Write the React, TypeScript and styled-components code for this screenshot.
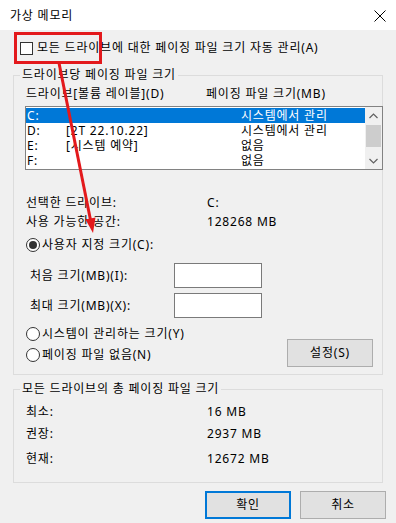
import React from 'react';
import styled, { createGlobalStyle, css } from 'styled-components';

const GlobalStyle = createGlobalStyle`
  html, body {
    margin: 0;
    padding: 0;
    background: #f0f0f0;
  }
  body {
    font-family: "Noto Sans", "Noto Sans CJK KR", sans-serif;
    font-size: 12px;
    letter-spacing: 0.8px;
    color: #000;
  }
  * {
    box-sizing: border-box;
  }
`;

const Window = styled.div`
  position: relative;
  width: 396px;
  height: 523px;
  background: #f0f0f0;
  overflow: hidden;
`;

const TitleBar = styled.div`
  height: 30px;
  background: #fff;
  display: flex;
  align-items: center;
  justify-content: space-between;
  padding: 0 10px 0 10px;
`;

const Title = styled.span`
  font-size: 12px;
  line-height: 16px;
  padding-top: 1px;
`;

const CloseButton = styled.div`
  width: 12px;
  height: 12px;
  margin-top: 2px;
  display: flex;
`;

const AutoRow = styled.div`
  display: flex;
  align-items: center;
  height: 16px;
  margin-top: 10px;
  padding-left: 20px;
  gap: 4px;
  line-height: 16px;
`;

const CheckBox = styled.span`
  width: 13px;
  height: 13px;
  border: 1px solid #333;
  background: #fff;
`;

const Group = styled.fieldset<{ $top: number }>`
  margin: ${p => p.$top}px 0 0 13px;
  width: 370px;
  padding: 0;
  border: 1px solid #dcdcdc;
  min-width: 0;
`;

const Legend = styled.legend`
  margin-left: 6px;
  padding: 0 2px;
  line-height: 16px;
`;

const GroupInner = styled.div<{ $pad: string }>`
  padding: ${p => p.$pad};
`;

const ListHeader = styled.div`
  display: grid;
  grid-template-columns: 180px 1fr;
  margin-top: 3px;
  padding-left: 1px;
  line-height: 16px;
`;

const ListBox = styled.div`
  display: flex;
  width: 358px;
  height: 64px;
  margin-top: 4px;
  border: 1px solid #828282;
  background: #fff;
`;

const Rows = styled.div`
  flex: 1;
  padding: 1px 0 0 0;
`;

const DriveRow = styled.div<{ $selected?: boolean }>`
  display: grid;
  grid-template-columns: 39px 175px 1fr;
  height: 15px;
  line-height: 15px;
  padding-left: 1px;
  ${p => p.$selected && css`
    background: #0078d7;
    color: #fff;
  `}
`;

const Cell = styled.span`
  display: block;
  height: 15px;
  overflow: hidden;
  white-space: nowrap;
`;

const ScrollBar = styled.div`
  width: 17px;
  background: #f0f0f0;
  display: flex;
  flex-direction: column;
  align-items: center;
`;

const ArrowBox = styled.div`
  height: 17px;
  width: 17px;
  display: flex;
  align-items: center;
  justify-content: center;
`;

const Thumb = styled.div`
  width: 15px;
  height: 22px;
  margin-top: 1px;
  background: #cdcdcd;
  flex-shrink: 0;
`;

const ScrollSpacer = styled.div`
  flex: 1;
`;

const InfoRow = styled.div<{ $top: number }>`
  display: grid;
  grid-template-columns: 181px 1fr;
  margin-top: ${p => p.$top}px;
  padding-left: 1px;
  line-height: 16px;
`;

const RadioRow = styled.div<{ $top: number }>`
  display: flex;
  align-items: center;
  gap: 2px;
  margin-top: ${p => p.$top}px;
  padding-left: 1px;
  line-height: 16px;
`;

const Radio = styled.span<{ $checked?: boolean }>`
  width: 14px;
  height: 14px;
  border-radius: 50%;
  border: 1px solid #333;
  background: #fff;
  display: flex;
  align-items: center;
  justify-content: center;
  &::after {
    content: '';
    width: 8px;
    height: 8px;
    border-radius: 50%;
    background: ${p => (p.$checked ? '#333' : 'transparent')};
  }
`;

const SizeRow = styled.div<{ $top: number }>`
  display: grid;
  grid-template-columns: 144px 88px;
  align-items: center;
  margin-top: ${p => p.$top}px;
  padding-left: 5px;
  line-height: 16px;
`;

const SizeInput = styled.div`
  height: 25px;
  border: 1px solid #7a7a7a;
  background: #fff;
`;

const BottomSection = styled.div`
  display: flex;
  justify-content: space-between;
  align-items: flex-end;
  margin-top: 8px;
`;

const RadioColumn = styled.div`
  padding-bottom: 4px;
`;

const Button = styled.div<{ $default?: boolean; $width: number }>`
  width: ${p => p.$width}px;
  height: 28px;
  display: flex;
  align-items: center;
  justify-content: center;
  background: #e1e1e1;
  border: ${p => (p.$default ? '2px solid #0078d7' : '1px solid #adadad')};
  line-height: 16px;
`;

const SetButton = styled(Button)`
  margin-right: 9px;
`;

const TotalRow = styled.div<{ $top: number }>`
  display: grid;
  grid-template-columns: 181px 1fr;
  margin-top: ${p => p.$top}px;
  padding-left: 1px;
  line-height: 16px;
`;

const ButtonBar = styled.div`
  display: flex;
  justify-content: flex-end;
  gap: 9px;
  margin-top: 8px;
  padding-right: 10px;
`;

const Annotation = styled.svg`
  position: absolute;
  left: 0;
  top: 0;
  pointer-events: none;
`;

const drives = [
  { letter: 'C:', label: '', size: '시스템에서 관리', selected: true },
  { letter: 'D:', label: '[2T 22.10.22]', size: '시스템에서 관리' },
  { letter: 'E:', label: '[시스템 예약]', size: '없음' },
  { letter: 'F:', label: '', size: '없음' },
];

const Chevron: React.FC<{ up?: boolean }> = ({ up }) => (
  <svg width="9" height="6" viewBox="0 0 9 6">
    <polyline
      points={up ? '0.5,5 4.5,1 8.5,5' : '0.5,1 4.5,5 8.5,1'}
      fill="none"
      stroke="#606060"
      strokeWidth="1.2"
    />
  </svg>
);

export default function App() {
  return (
    <Window>
      <GlobalStyle />
      <TitleBar>
        <Title>가상 메모리</Title>
        <CloseButton>
          <svg width="12" height="12" viewBox="0 0 12 12">
            <path d="M0.5 0.5 L11.5 11.5 M11.5 0.5 L0.5 11.5" stroke="#000" strokeWidth="1" />
          </svg>
        </CloseButton>
      </TitleBar>

      <AutoRow>
        <CheckBox />
        <span>모든 드라이브에 대한 페이징 파일 크기 자동 관리(A)</span>
      </AutoRow>

      <Group $top={11}>
        <Legend>드라이브당 페이징 파일 크기</Legend>
        <GroupInner $pad="0 0 7px 11px">
          <ListHeader>
            <span>드라이브[볼륨 레이블](D)</span>
            <span>페이징 파일 크기(MB)</span>
          </ListHeader>
          <ListBox>
            <Rows>
              {drives.map(d => (
                <DriveRow key={d.letter} $selected={d.selected}>
                  <Cell>{d.letter}</Cell>
                  <Cell>{d.label}</Cell>
                  <Cell>{d.size}</Cell>
                </DriveRow>
              ))}
            </Rows>
            <ScrollBar>
              <ArrowBox><Chevron up /></ArrowBox>
              <Thumb />
              <ScrollSpacer />
              <ArrowBox><Chevron /></ArrowBox>
            </ScrollBar>
          </ListBox>

          <InfoRow $top={25}>
            <span>선택한 드라이브:</span>
            <span>C:</span>
          </InfoRow>
          <InfoRow $top={3}>
            <span>사용 가능한 공간:</span>
            <span>128268 MB</span>
          </InfoRow>

          <RadioRow $top={7}>
            <Radio $checked />
            <span>사용자 지정 크기(C):</span>
          </RadioRow>

          <SizeRow $top={10}>
            <span>처음 크기(MB)(I):</span>
            <SizeInput />
          </SizeRow>
          <SizeRow $top={5}>
            <span>최대 크기(MB)(X):</span>
            <SizeInput />
          </SizeRow>

          <BottomSection>
            <RadioColumn>
              <RadioRow $top={0}>
                <Radio />
                <span>시스템이 관리하는 크기(Y)</span>
              </RadioRow>
              <RadioRow $top={5}>
                <Radio />
                <span>페이징 파일 없음(N)</span>
              </RadioRow>
            </RadioColumn>
            <SetButton $width={86}>설정(S)</SetButton>
          </BottomSection>
        </GroupInner>
      </Group>

      <Group $top={6}>
        <Legend>모든 드라이브의 총 페이징 파일 크기</Legend>
        <GroupInner $pad="7px 0 15px 11px">
          <TotalRow $top={0}>
            <span>최소:</span>
            <span>16 MB</span>
          </TotalRow>
          <TotalRow $top={6}>
            <span>권장:</span>
            <span>2937 MB</span>
          </TotalRow>
          <TotalRow $top={9}>
            <span>현재:</span>
            <span>12672 MB</span>
          </TotalRow>
        </GroupInner>
      </Group>

      <ButtonBar>
        <Button $default $width={86}>확인</Button>
        <Button $width={86}>취소</Button>
      </ButtonBar>

      <Annotation width="396" height="523" viewBox="0 0 396 523">
        <rect x="15.5" y="33.5" width="85" height="29" fill="none" stroke="#e3191c" strokeWidth="3" />
        <line x1="59" y1="63" x2="90.5" y2="220" stroke="#e3191c" strokeWidth="3" />
        <polygon points="93,233 95.5,217.5 85.5,219.5" fill="#e3191c" />
      </Annotation>
    </Window>
  );
}
